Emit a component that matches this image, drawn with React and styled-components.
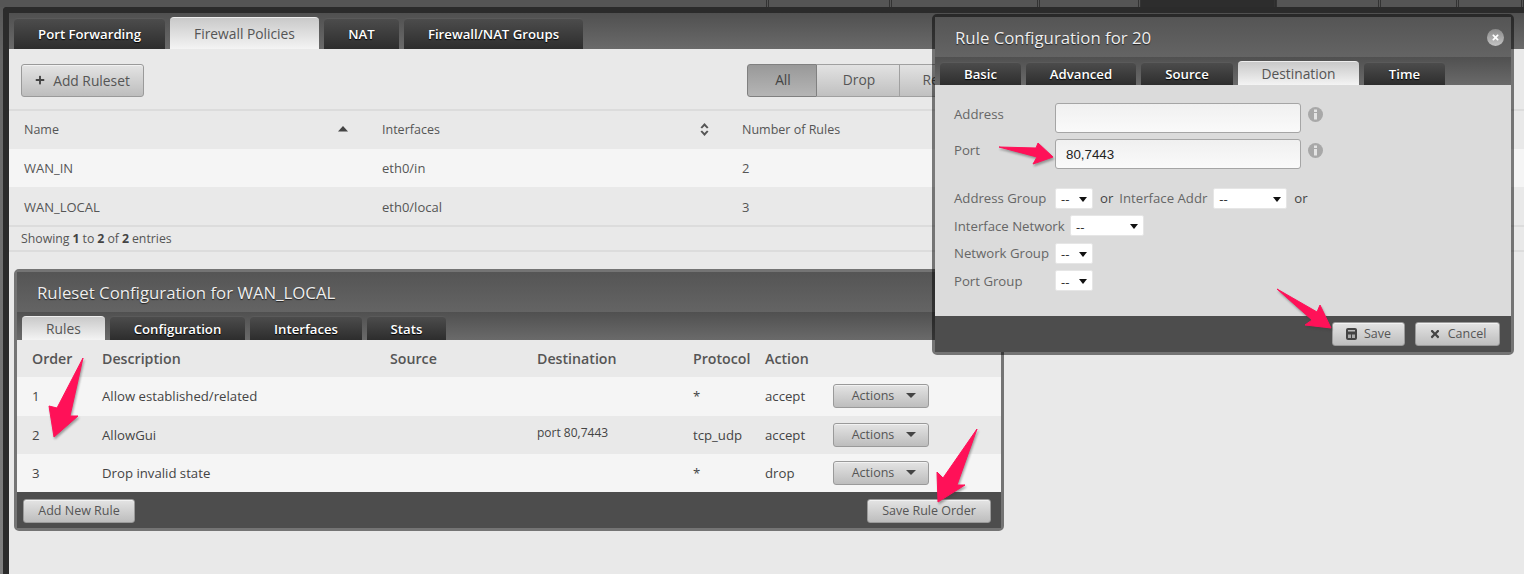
import React from 'react';
import styled, { createGlobalStyle } from 'styled-components';
import { FaPlus, FaTimes } from 'react-icons/fa';

const GlobalStyle = createGlobalStyle`
	html, body {
		margin: 0;
		padding: 0;
		height: 100%;
	}
	body {
		font-family: "Open Sans", "Liberation Sans", sans-serif;
		font-size: 13.2px;
		color: #444;
		background: linear-gradient(#555555, #666666 60px, #808080);
		overflow: hidden;
	}
	* {
		box-sizing: border-box;
	}
`;

const Page = styled.div`
	position: relative;
	width: 1524px;
	height: 574px;
	overflow: hidden;
`;

const TopNav = styled.div`
	display: flex;
	height: 7px;
	background: #555;
`;

const NavItem = styled.div`
	width: ${(p) => p.$w}px;
	flex-shrink: 0;
	border-right: 3px double #333;
	background: ${(p) => (p.$active ? '#2d2d2d' : '#555')};
`;

const Frame = styled.div`
	margin-left: 3px;
	height: 567px;
	border-top: 6px solid #2b2b2b;
	border-left: 6px solid #2b2b2b;
	border-top-left-radius: 4px;
	background: #e9e9e9;
`;

const TabStrip = styled.div`
	display: flex;
	align-items: flex-end;
	gap: ${(p) => p.$gap || 5}px;
	height: ${(p) => p.$h}px;
	padding-left: ${(p) => p.$left}px;
	background: linear-gradient(#505050, #6a6a6a);
`;

const Tab = styled.div`
	display: flex;
	align-items: center;
	justify-content: center;
	flex-shrink: 0;
	width: ${(p) => p.$w}px;
	height: ${(p) => p.$h}px;
	border-radius: 4px 4px 0 0;
	font-size: 13.2px;
	font-weight: 600;
	color: #fff;
	text-shadow: 0 1px 1px #000;
	background: linear-gradient(#4c4c4c, #2d2d2d);
	border-top: 1px solid #5a5a5a;
	${(p) =>
		p.$active &&
		`
		font-size: 13.8px;
		font-weight: 400;
		color: #555;
		text-shadow: none;
		border-top: 1px solid #eee;
		background: linear-gradient(#c9c9c9, #f4f4f4);
	`}
`;

const Toolbar = styled.div`
	position: relative;
	display: flex;
	justify-content: space-between;
	height: 62px;
	padding: 15px 0 0 12px;
	border-bottom: 2px solid #dcdcdc;
`;

const Button = styled.button`
	display: inline-flex;
	align-items: center;
	justify-content: center;
	gap: ${(p) => p.$gap || 0}px;
	flex-shrink: 0;
	width: ${(p) => p.$w}px;
	height: ${(p) => p.$h || 24}px;
	padding: 0 0 1px ${(p) => p.$left || 0}px;
	border: 1px solid #9a9a9a;
	border-radius: 3px;
	font-family: inherit;
	font-size: ${(p) => p.$size || 12.5}px;
	color: #555;
	background: linear-gradient(#e4e4e4, #bdbdbd);
	box-shadow: inset 0 1px 0 #f2f2f2;
	svg {
		color: #444;
		flex-shrink: 0;
	}
`;

const Segments = styled.div`
	display: flex;
	margin-left: 603px;
	height: 33px;
	flex: 1;
`;

const Segment = styled.div`
	display: flex;
	align-items: center;
	justify-content: center;
	width: ${(p) => p.$w}px;
	flex-shrink: 0;
	padding: 0 0 2px 2px;
	border: 1px solid #a0a0a0;
	border-left: 0;
	font-size: 13.8px;
	color: #555;
	background: linear-gradient(#e2e2e2, #c0c0c0);
	${(p) =>
		p.$active &&
		`
		border: 1px solid #808080;
		border-radius: 3px 0 0 3px;
		background: linear-gradient(#999, #b5b5b5);
		color: #444;
	`}
`;

const PolicyRow = styled.div`
	display: grid;
	grid-template-columns: 358px 360px 1fr;
	align-items: center;
	height: 38px;
	padding: ${(p) => p.$pad || '0 0 0 15px'};
	background: ${(p) => p.$bg || '#e9e9e9'};
	font-size: ${(p) => p.$size || 13}px;
	color: #555;
	font-weight: ${(p) => p.$weight || 400};
`;

const SortCell = styled.span`
	display: flex;
	align-items: center;
	justify-content: space-between;
	padding-right: ${(p) => p.$pad}px;
`;

const TableInfo = styled.div`
	display: flex;
	align-items: center;
	gap: 3px;
	height: 27px;
	padding-left: 12px;
	border-top: 2px solid #dcdcdc;
	border-bottom: 2px solid #dcdcdc;
	font-size: 12.3px;
	font-weight: 500;
	color: #555;
	b {
		font-weight: 700;
		color: #444;
	}
`;

const Panel = styled.div`
	width: 990px;
	margin: 17px 0 0 5px;
	border: 3px solid rgba(0, 0, 0, 0.5);
	border-radius: 5px;
	background-clip: padding-box;
`;

const PanelTitle = styled.div`
	display: flex;
	align-items: center;
	justify-content: space-between;
	height: 40px;
	padding: 0 ${(p) => p.$right || 0}px 0 20px;
	font-size: 16.8px;
	color: #eee;
	text-shadow: 0 1px 1px #222;
	background: linear-gradient(#555, #646464);
`;

const RuleRow = styled.div`
	display: grid;
	grid-template-columns: 70px 288px 147px 156px 72px 68px 1fr;
	align-items: center;
	height: ${(p) => p.$h || 38}px;
	padding: 0 0 ${(p) => p.$bottom || 0}px 15px;
	font-size: ${(p) => p.$size || 13.2}px;
	font-weight: ${(p) => p.$weight || 400};
	color: ${(p) => p.$color || '#444'};
	background: ${(p) => p.$bg || '#e9e9e9'};
`;

const PortCell = styled.span`
	font-size: 12px;
	margin-top: -6px;
`;

const Footer = styled.div`
	display: flex;
	align-items: flex-start;
	justify-content: ${(p) => p.$justify || 'space-between'};
	gap: ${(p) => p.$gap || 0}px;
	height: 36px;
	padding: ${(p) => p.$pad};
	background: #4d4d4d;
`;

const Caret = styled.span`
	display: inline-block;
	width: 0;
	height: 0;
	border-left: 5px solid transparent;
	border-right: 5px solid transparent;
	border-top: 5px solid #444;
`;

const Dialog = styled.div`
	position: absolute;
	left: 932px;
	top: 14px;
	width: 582px;
	border: 3px solid rgba(0, 0, 0, 0.5);
	border-radius: 5px;
	background-clip: padding-box;
`;

const CloseButton = styled.div`
	display: flex;
	align-items: center;
	justify-content: center;
	width: 17px;
	height: 17px;
	border-radius: 50%;
	color: #fff;
	background: linear-gradient(#8a8a8a, #c4c4c4);
`;

const DialogBody = styled.div`
	height: 231px;
	padding: 18px 19px 0;
	background: #dbdbdb;
`;

const FieldRow = styled.div`
	display: flex;
	align-items: flex-start;
	margin-bottom: 6px;
`;

const FieldLabel = styled.label`
	width: 101px;
	line-height: 22px;
	color: #666;
`;

const TextInput = styled.input`
	width: 246px;
	height: 30px;
	padding: 0 10px;
	border: 1px solid #a5a5a5;
	border-radius: 3px;
	font-family: "Liberation Sans", sans-serif;
	font-size: 13.33px;
	color: #222;
	background: linear-gradient(#f0f0f0, #fafafa);
	outline: none;
`;

const InfoIcon = styled.svg`
	width: 15px;
	height: 15px;
	margin: 4px 0 0 7px;
`;

const SelectGrid = styled.div`
	display: flex;
	flex-direction: column;
	gap: 6.5px;
	margin-top: 18.5px;
`;

const SelectRow = styled.div`
	display: flex;
	align-items: center;
	height: 21px;
	color: #666;
`;

const SelectLabel = styled.span`
	width: ${(p) => p.$w}px;
	flex-shrink: 0;
`;

const OrText = styled.span`
	color: #444;
	margin: 0 6px 0 7px;
`;

const SelectBox = styled.div`
	display: flex;
	align-items: center;
	justify-content: space-between;
	width: ${(p) => p.$w}px;
	height: 21px;
	flex-shrink: 0;
	padding: 2px 5px 0 5px;
	border: 1px solid #e6e6e6;
	border-radius: 2px;
	font-size: 13px;
	color: #333;
	background: #fff;
	&::after {
		content: "";
		border-left: 4px solid transparent;
		border-right: 4px solid transparent;
		border-top: 5px solid #111;
	}
`;

const ArrowLayer = styled.svg`
	position: absolute;
	left: 0;
	top: 0;
	width: 1524px;
	height: 574px;
	pointer-events: none;
	filter: drop-shadow(1px 2px 1px rgba(60, 60, 60, 0.45));
`;

const navWidths = [769, 123, 148, 101, 136, 104, 78, 65];
const arrows = [
	'83,358 70,416 78,416 54,437 49,406 57,408',
	'977,429 957,485 965,485 938,502 937,472 943,478',
	'999,147 1036,148 1038,143 1053,157 1033,164 1037,157',
	'1277,289 1317,312 1320,305 1331,328 1305,325 1312,320',
];
const rules = [
	{ order: 1, desc: 'Allow established/related', proto: '*', action: 'accept', bg: '#f5f5f5', h: 39, bottom: 1 },
	{ order: 2, desc: 'AllowGui', dest: 'port 80,7443', proto: 'tcp_udp', action: 'accept', bg: '#e9e9e9', h: 38 },
	{ order: 3, desc: 'Drop invalid state', proto: '*', action: 'drop', bg: '#f5f5f5', h: 38 },
];

const Info = () => (
	<InfoIcon viewBox="0 0 15 15">
		<circle cx="7.5" cy="7.5" r="7.5" fill="#a8a8a8" />
		<rect x="6" y="2.5" width="3" height="2.5" fill="#e4e4e4" />
		<rect x="6" y="6" width="3" height="6.5" fill="#e4e4e4" />
	</InfoIcon>
);

const SaveIcon = () => (
	<svg width="11" height="12" viewBox="0 0 11 12">
		<rect width="11" height="12" rx="2" fill="#444" />
		<rect x="2" y="2" width="7" height="1.5" fill="#bbb" />
		<rect x="2" y="6.5" width="3" height="3.5" fill="#aaa" />
		<rect x="6" y="6.5" width="3" height="3.5" fill="#aaa" />
	</svg>
);

const SortUp = () => (
	<svg width="10" height="6" viewBox="0 0 10 6">
		<path d="M5 0 L10 5.5 L0 5.5 Z" fill="#444" />
	</svg>
);

const SortBoth = () => (
	<svg width="9" height="13" viewBox="0 0 9 13">
		<path d="M4.5 0 L8.5 4.5 L7 5.5 L4.5 3 L2 5.5 L0.5 4.5 Z M4.5 13 L8.5 8.5 L7 7.5 L4.5 10 L2 7.5 L0.5 8.5 Z" fill="#555" />
	</svg>
);

export default function App() {
	return (
		<Page>
			<GlobalStyle />
			<TopNav>
				{navWidths.map((w, i) => (
					<NavItem key={i} $w={w} $active={i === 4} />
				))}
			</TopNav>
			<Frame>
				<TabStrip $h={36} $left={5}>
					<Tab $w={151} $h={31}>Port Forwarding</Tab>
					<Tab $w={149} $h={32} $active>Firewall Policies</Tab>
					<Tab $w={75} $h={31}>NAT</Tab>
					<Tab $w={179} $h={31}>Firewall/NAT Groups</Tab>
				</TabStrip>
				<Toolbar>
					<Button $w={123} $h={33} $gap={8} $size={13.8}>
						<FaPlus size={10} />
						Add Ruleset
					</Button>
					<Segments>
						<Segment $w={70} $active>All</Segment>
						<Segment $w={83}>Drop</Segment>
						<Segment $w={83}>Reject</Segment>
					</Segments>
				</Toolbar>
				<PolicyRow $size={12.5} $weight={500} $pad="0 0 2px 15px">
					<SortCell $pad={34}>Name<SortUp /></SortCell>
					<SortCell $pad={33}>Interfaces<SortBoth /></SortCell>
					<span>Number of Rules</span>
				</PolicyRow>
				<PolicyRow $bg="#f5f5f5">
					<span>WAN_IN</span>
					<span>eth0/in</span>
					<span>2</span>
				</PolicyRow>
				<PolicyRow $pad="1px 0 0 15px">
					<span>WAN_LOCAL</span>
					<span>eth0/local</span>
					<span>3</span>
				</PolicyRow>
				<TableInfo>
					Showing <b>1</b> to <b>2</b> of <b>2</b> entries
				</TableInfo>
				<Panel>
					<PanelTitle>Ruleset Configuration for WAN_LOCAL</PanelTitle>
					<TabStrip $h={28} $left={5}>
						<Tab $w={83} $h={24} $active>Rules</Tab>
						<Tab $w={135} $h={24}>Configuration</Tab>
						<Tab $w={112} $h={24}>Interfaces</Tab>
						<Tab $w={79} $h={24}>Stats</Tab>
					</TabStrip>
					<RuleRow $h={37} $size={14.2} $weight={600} $color="#555">
						<span>Order</span>
						<span>Description</span>
						<span>Source</span>
						<span>Destination</span>
						<span>Protocol</span>
						<span>Action</span>
						<span />
					</RuleRow>
					{rules.map((r) => (
						<RuleRow key={r.order} $bg={r.bg} $h={r.h} $bottom={r.bottom}>
							<span>{r.order}</span>
							<span>{r.desc}</span>
							<span />
							<PortCell>{r.dest}</PortCell>
							<span>{r.proto}</span>
							<span>{r.action}</span>
							<Button $w={96} $h={24} $gap={12} $left={6}>
								Actions
								<Caret />
							</Button>
						</RuleRow>
					))}
					<Footer $pad="7px 10px 0 6px">
						<Button $w={112}>Add New Rule</Button>
						<Button $w={124}>Save Rule Order</Button>
					</Footer>
				</Panel>
			</Frame>
			<Dialog>
				<PanelTitle $right={7}>
					Rule Configuration for 20
					<CloseButton>
						<FaTimes size={9} />
					</CloseButton>
				</PanelTitle>
				<TabStrip $h={28} $left={5}>
					<Tab $w={81} $h={23}>Basic</Tab>
					<Tab $w={110} $h={23}>Advanced</Tab>
					<Tab $w={92} $h={23}>Source</Tab>
					<Tab $w={121} $h={24} $active>Destination</Tab>
					<Tab $w={81} $h={23}>Time</Tab>
				</TabStrip>
				<DialogBody>
					<FieldRow>
						<FieldLabel>Address</FieldLabel>
						<TextInput readOnly value="" />
						<Info />
					</FieldRow>
					<FieldRow>
						<FieldLabel>Port</FieldLabel>
						<TextInput readOnly value="80,7443" />
						<Info />
					</FieldRow>
					<SelectGrid>
						<SelectRow>
							<SelectLabel $w={101}>Address Group</SelectLabel>
							<SelectBox $w={38}>--</SelectBox>
							<OrText>or</OrText>
							<SelectLabel $w={94}>Interface Addr</SelectLabel>
							<SelectBox $w={74}>--</SelectBox>
							<OrText>or</OrText>
						</SelectRow>
						<SelectRow>
							<SelectLabel $w={116}>Interface Network</SelectLabel>
							<SelectBox $w={74}>--</SelectBox>
						</SelectRow>
						<SelectRow>
							<SelectLabel $w={101}>Network Group</SelectLabel>
							<SelectBox $w={38}>--</SelectBox>
						</SelectRow>
						<SelectRow>
							<SelectLabel $w={101}>Port Group</SelectLabel>
							<SelectBox $w={38}>--</SelectBox>
						</SelectRow>
					</SelectGrid>
				</DialogBody>
				<Footer $justify="flex-end" $gap={10} $pad="6px 11px 0 0">
					<Button $w={73} $gap={7}>
						<SaveIcon />
						Save
					</Button>
					<Button $w={85} $gap={7}>
						<FaTimes size={12} />
						Cancel
					</Button>
				</Footer>
			</Dialog>
			<ArrowLayer viewBox="0 0 1524 574">
				{arrows.map((pts) => (
					<polygon key={pts} points={pts} fill="#ff1158" stroke="#ff1158" strokeWidth="1" strokeLinejoin="round" />
				))}
			</ArrowLayer>
		</Page>
	);
}
